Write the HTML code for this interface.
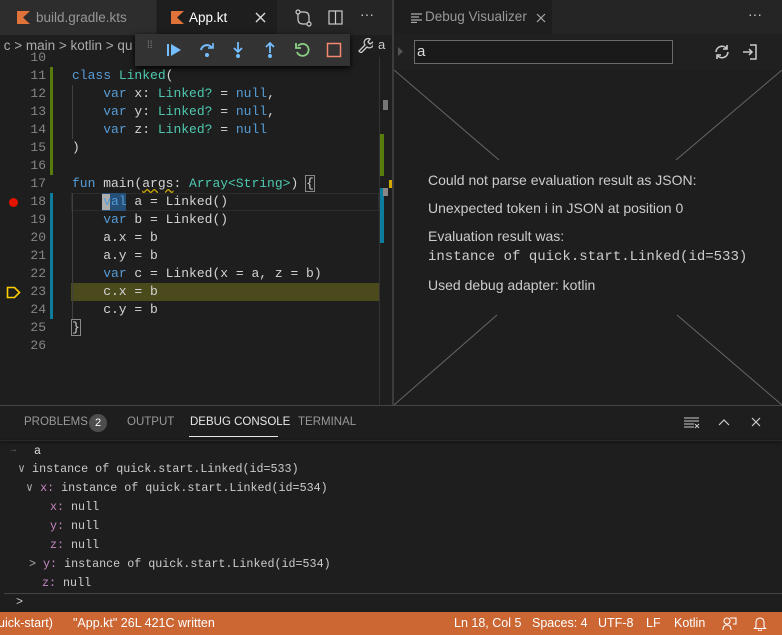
<!DOCTYPE html>
<html><head><meta charset="utf-8"><style>
*{margin:0;padding:0;box-sizing:border-box}
body{width:782px;height:635px;overflow:hidden;background:#1e1e1e;font-family:"Liberation Sans",sans-serif;position:relative;color:#ccc}
.a{position:absolute}
.mono{font-family:"Liberation Mono","DejaVu Sans Mono",monospace;font-size:13px;white-space:pre}
.ui{font-family:"Liberation Sans",sans-serif}
.ln{position:absolute;left:0;width:46px;text-align:right;color:#858585;font-family:"Liberation Mono",monospace;font-size:13px;height:18px;line-height:18px}
.cl{position:absolute;left:72px;height:18px;line-height:18px;color:#d4d4d4}
.k{color:#569cd6}.t{color:#4ec9b0}.p{color:#c586c0}
.con{position:absolute;height:19px;line-height:19px;color:#ccc;font-family:"Liberation Mono",monospace;font-size:11.7px;white-space:pre}
</style></head><body>
<!-- tab bar -->
<div class="a" style="left:0;top:0;width:782px;height:35px;background:#252526"></div>
<div class="a ui" style="left:0;top:0;width:156px;height:35px;background:#2d2d2d;font-size:13.5px;color:#969696;line-height:35px;padding-left:36px">build.gradle.kts</div>
<svg class="a" style="left:17px;top:11px" width="13" height="13"><polygon points="0,0 13,0 6,6.5 13,13 0,13" fill="#e0733a"/></svg>
<div class="a ui" style="left:157px;top:0;width:120px;height:35px;background:#1e1e1e;font-size:13.5px;color:#fff;line-height:35px;padding-left:32px">App.kt</div>
<svg class="a" style="left:171px;top:11px" width="13" height="13"><polygon points="0,0 13,0 6,6.5 13,13 0,13" fill="#e0733a"/></svg>
<svg class="a" style="left:255px;top:12px" width="11" height="11"><path d="M1 1L10 10M10 1L1 10" stroke="#ddd" stroke-width="1.4"/></svg>
<svg class="a" style="left:294px;top:8px" width="20" height="20" fill="none" stroke="#ccc" stroke-width="1.2"><circle cx="4" cy="4" r="2"/><circle cx="15" cy="16" r="2"/><path d="M4 6v5q0 5 5 5h4M15 14v-5q0-5-5-5h-4"/></svg>
<svg class="a" style="left:328px;top:10px" width="15" height="15" fill="none" stroke="#ccc" stroke-width="1.2"><rect x="1" y="1" width="13" height="13"/><path d="M7.5 1v13"/></svg>
<div class="a" style="left:360px;top:6px;color:#ccc;font-size:14px">···</div>
<!-- breadcrumbs -->
<div class="a ui" style="left:0;top:35px;width:392px;height:22px;background:#1e1e1e;font-size:13.5px;color:#aaa;line-height:22px;white-space:nowrap;overflow:hidden">&nbsp;c &gt; main &gt; kotlin &gt; qu</div>
<svg class="a" style="left:357px;top:37px" width="16" height="16" fill="none" stroke="#ccc" stroke-width="1.3"><path d="M2 14l6-6a4 4 0 0 1 5-6l-2 3 2 2 3-2a4 4 0 0 1-6 5l-6 6z"/></svg>
<div class="a ui" style="left:378px;top:37px;font-size:13px;color:#ccc">a</div>
<!-- debug toolbar -->
<div class="a" style="left:135px;top:34px;width:215px;height:32px;background:#333333;box-shadow:0 2px 6px #000"></div>
<div class="a" style="left:147px;top:44px;color:#888;font-size:10px;line-height:4px">⁞⁞</div>
<svg class="a" style="left:166px;top:42px" width="16" height="16"><rect x="1" y="2" width="2" height="12" fill="#75beff"/><polygon points="5,2 15,8 5,14" fill="#75beff"/></svg>
<svg class="a" style="left:198px;top:41px" width="18" height="18" fill="none" stroke="#75beff" stroke-width="2"><path d="M3 9a6 6 0 0 1 11-2"/><path d="M15 2v5h-5" stroke-width="1.6"/><circle cx="9" cy="14" r="2" fill="#75beff" stroke="none"/></svg>
<svg class="a" style="left:230px;top:41px" width="16" height="18" fill="none" stroke="#75beff" stroke-width="1.8"><path d="M8 1v9M4 7l4 4 4-4"/><circle cx="8" cy="15" r="2" fill="#75beff" stroke="none"/></svg>
<svg class="a" style="left:262px;top:41px" width="16" height="18" fill="none" stroke="#75beff" stroke-width="1.8"><path d="M8 12V3M4 6l4-4 4 4"/><circle cx="8" cy="15" r="2" fill="#75beff" stroke="none"/></svg>
<svg class="a" style="left:294px;top:42px" width="16" height="16" fill="none" stroke="#89d185" stroke-width="1.8"><path d="M4 4a6 6 0 1 1-1 6"/><path d="M2 1v5h5"/></svg>
<svg class="a" style="left:326px;top:42px" width="16" height="16"><rect x="1.5" y="1.5" width="13" height="13" fill="none" stroke="#f48771" stroke-width="1.5"/></svg>
<!-- editor -->
<div class="a" style="left:71px;top:193px;width:308px;height:18px;border:1px solid #2c2c2c"></div>
<div class="a" style="left:71px;top:283px;width:308px;height:18px;background:#4b4a1c"></div>
<div class="a" style="left:102px;top:193px;width:24px;height:18px;background:#264f78"></div>
<div class="a" style="left:102px;top:194px;width:8px;height:16px;background:#aeafad"></div>
<div class="a" style="left:50px;top:67px;width:3px;height:108px;background:#587c0c"></div>
<div class="a" style="left:50px;top:193px;width:3px;height:126px;background:#0c7d9d"></div>
<div class="a" style="left:72px;top:85px;width:1px;height:54px;background:#404040"></div>
<div class="a" style="left:72px;top:193px;width:1px;height:126px;background:#404040"></div>
<div class="a" style="left:9px;top:198px;width:9px;height:9px;border-radius:50%;background:#e51400"></div>
<svg class="a" style="left:6px;top:286px" width="15" height="13"><path d="M1.5 1.5h7l5 5-5 5h-7z" fill="none" stroke="#ffcc00" stroke-width="1.6"/></svg>
<div class="ln" style="top:49px">10</div>
<div class="ln" style="top:67px">11</div><div class="ln" style="top:85px">12</div><div class="ln" style="top:103px">13</div><div class="ln" style="top:121px">14</div><div class="ln" style="top:139px">15</div><div class="ln" style="top:157px">16</div><div class="ln" style="top:175px">17</div><div class="ln" style="top:193px">18</div><div class="ln" style="top:211px">19</div><div class="ln" style="top:229px">20</div><div class="ln" style="top:247px">21</div><div class="ln" style="top:265px">22</div><div class="ln" style="top:283px">23</div><div class="ln" style="top:301px">24</div><div class="ln" style="top:319px">25</div><div class="ln" style="top:337px">26</div>
<div class="cl mono" style="top:67px"><span class="k">class</span> <span class="t">Linked</span>(</div>
<div class="cl mono" style="top:85px">    <span class="k">var</span> x: <span class="t">Linked?</span> = <span class="k">null</span>,</div>
<div class="cl mono" style="top:103px">    <span class="k">var</span> y: <span class="t">Linked?</span> = <span class="k">null</span>,</div>
<div class="cl mono" style="top:121px">    <span class="k">var</span> z: <span class="t">Linked?</span> = <span class="k">null</span></div>
<div class="cl mono" style="top:139px">)</div>
<div class="cl mono" style="top:175px"><span class="k">fun</span> main(<span style="text-decoration:underline wavy #cca700">args</span>: <span class="t">Array&lt;String&gt;</span>) <span style="outline:1px solid #888">{</span></div>
<div class="cl mono" style="top:193px">    <span class="k">val</span> a = Linked()</div>
<div class="cl mono" style="top:211px">    <span class="k">var</span> b = Linked()</div>
<div class="cl mono" style="top:229px">    a.x = b</div>
<div class="cl mono" style="top:247px">    a.y = b</div>
<div class="cl mono" style="top:265px">    <span class="k">var</span> c = Linked(x = a, z = b)</div>
<div class="cl mono" style="top:283px">    c.x = b</div>
<div class="cl mono" style="top:301px">    c.y = b</div>
<div class="cl mono" style="top:319px"><span style="outline:1px solid #888">}</span></div>
<!-- editor scrollbar -->
<div class="a" style="left:379px;top:57px;width:1px;height:348px;background:#333"></div>
<div class="a" style="left:383px;top:100px;width:5px;height:10px;background:#777"></div>
<div class="a" style="left:380px;top:134px;width:4px;height:42px;background:#587c0c"></div>
<div class="a" style="left:389px;top:180px;width:4px;height:8px;background:#d0a900"></div>
<div class="a" style="left:380px;top:188px;width:4px;height:55px;background:#0c7d9d"></div>
<div class="a" style="left:383px;top:188px;width:5px;height:8px;background:#888"></div>
<!-- right panel -->
<div class="a" style="left:392px;top:0;width:2px;height:405px;background:#3c3c3c"></div>
<div class="a ui" style="left:394px;top:0;width:158px;height:34px;background:#1e1e1e;font-size:13.5px;color:#999;line-height:34px;padding-left:31px">Debug Visualizer</div>
<svg class="a" style="left:411px;top:13px" width="12" height="10" stroke="#aaa" stroke-width="1.2"><path d="M0 1h11M0 4h8M0 7h11M0 9.5h6"/></svg>
<svg class="a" style="left:536px;top:13px" width="10" height="10"><path d="M1 1L9 9M9 1L1 9" stroke="#aaa" stroke-width="1.2"/></svg>
<div class="a" style="left:748px;top:6px;color:#ccc;font-size:14px">···</div>
<div class="a" style="left:394px;top:34px;width:388px;height:36px;background:#202020"></div>
<svg class="a" style="left:398px;top:47px" width="6" height="9"><polygon points="0,0 5,4.5 0,9" fill="#555"/></svg>
<div class="a" style="left:414px;top:40px;width:259px;height:24px;border:1px solid #6b6b6b;background:#1a1a1a;color:#ddd;font-size:15px;line-height:22px;padding-left:2px">a</div>
<svg class="a" style="left:713px;top:43px" width="18" height="18" fill="none" stroke="#ccc" stroke-width="1.6"><path d="M3 9a6 6 0 0 1 11-3M15 9a6 6 0 0 1-11 3"/><path d="M14 2v4h-4M4 16v-4h4"/></svg>
<svg class="a" style="left:742px;top:44px" width="16" height="16" fill="none" stroke="#ccc" stroke-width="1.5"><path d="M8 1h6v14h-6M1 8h9M7 5l3 3-3 3"/></svg>
<svg class="a" style="left:394px;top:70px" width="388" height="335" stroke="#666" stroke-width="1"><path d="M0 0L105 90M388 0L282 90M103 245L0 335M283 245L388 335"/></svg>
<div class="a" style="left:428px;top:172px;font-size:14px;color:#ccc">Could not parse evaluation result as JSON:</div>
<div class="a" style="left:428px;top:200px;font-size:14px;color:#ccc">Unexpected token i in JSON at position 0</div>
<div class="a" style="left:428px;top:228px;font-size:14px;color:#ccc">Evaluation result was:</div>
<div class="a mono" style="left:428px;top:249px;font-size:14px;color:#ccc">instance of quick.start.Linked(id=533)</div>
<div class="a" style="left:428px;top:277px;font-size:14px;color:#ccc">Used debug adapter: kotlin</div>
<!-- panel -->
<div class="a" style="left:0;top:405px;width:782px;height:1px;background:#444"></div>
<div class="a" style="left:0;top:406px;width:782px;height:34px;background:#1e1e1e"></div>
<div class="a ui" style="left:24px;top:416px;font-size:11.5px;color:#999">PROBLEMS</div>
<div class="a ui" style="left:89px;top:414px;width:18px;height:18px;border-radius:9px;background:#4d4d4d;color:#fff;font-size:11px;text-align:center;line-height:18px">2</div>
<div class="a ui" style="left:127px;top:416px;font-size:11.5px;color:#999">OUTPUT</div>
<div class="a ui" style="left:190px;top:416px;font-size:11.5px;color:#e7e7e7">DEBUG CONSOLE</div>
<div class="a" style="left:189px;top:436px;width:89px;height:1px;background:#e7e7e7"></div>
<div class="a ui" style="left:298px;top:416px;font-size:11.5px;color:#999">TERMINAL</div>
<svg class="a" style="left:684px;top:417px" width="16" height="12" stroke="#ccc" stroke-width="1"><path d="M0 1h15M0 4h15M0 7h10M0 10h10M11 7l4 4M15 7l-4 4"/></svg>
<svg class="a" style="left:718px;top:418px" width="12" height="8" fill="none" stroke="#ccc" stroke-width="1.2"><path d="M1 7l5-5 5 5"/></svg>
<svg class="a" style="left:751px;top:417px" width="10" height="10"><path d="M1 1L9 9M9 1L1 9" stroke="#ccc" stroke-width="1.2"/></svg>
<div class="a" style="left:0;top:440px;width:782px;height:1px;background:#2a2a2a;box-shadow:0 1px 3px #000"></div>
<div class="con" style="left:10px;top:441px;color:#666;font-size:10px">→</div>
<div class="con" style="left:34px;top:442px;color:#ddd">a</div>
<div class="con" style="left:18px;top:460px"><span style="color:#aaa">∨</span> instance of quick.start.Linked(id=533)</div>
<div class="con" style="left:26px;top:479px"><span style="color:#aaa">∨</span> <span class="p">x:</span> instance of quick.start.Linked(id=534)</div>
<div class="con" style="left:50px;top:498px"><span class="p">x:</span> null</div>
<div class="con" style="left:50px;top:517px"><span class="p">y:</span> null</div>
<div class="con" style="left:50px;top:536px"><span class="p">z:</span> null</div>
<div class="con" style="left:29px;top:555px"><span style="color:#aaa">&gt;</span> <span class="p">y:</span> instance of quick.start.Linked(id=534)</div>
<div class="con" style="left:42px;top:574px"><span class="p">z:</span> null</div>
<div class="a" style="left:4px;top:593px;width:778px;height:1px;background:#444"></div>
<div class="con" style="left:16px;top:593px;color:#ccc">&gt;</div>
<!-- status bar -->
<div class="a ui" style="left:0;top:612px;width:782px;height:23px;background:#cc6633;color:#fff;font-size:12.5px;line-height:22px;white-space:nowrap">
<span class="a" style="left:-2px">uick-start)</span>
<span class="a" style="left:73px">"App.kt" 26L 421C written</span>
<span class="a" style="left:454px">Ln 18, Col 5</span>
<span class="a" style="left:532px">Spaces: 4</span>
<span class="a" style="left:598px">UTF-8</span>
<span class="a" style="left:646px">LF</span>
<span class="a" style="left:674px">Kotlin</span>
</div>
<svg class="a" style="left:722px;top:616px" width="15" height="15" fill="none" stroke="#fff" stroke-width="1.1"><circle cx="5" cy="5" r="3"/><path d="M1 14q0-5 4-5t4 5M8 2h6v6h-3"/></svg>
<svg class="a" style="left:753px;top:616px" width="14" height="15" fill="none" stroke="#fff" stroke-width="1.1"><path d="M3 11V6a4 4 0 0 1 8 0v5l1.5 1.5h-11zM5.5 13.5a1.5 1.5 0 0 0 3 0"/></svg>
</body></html>
